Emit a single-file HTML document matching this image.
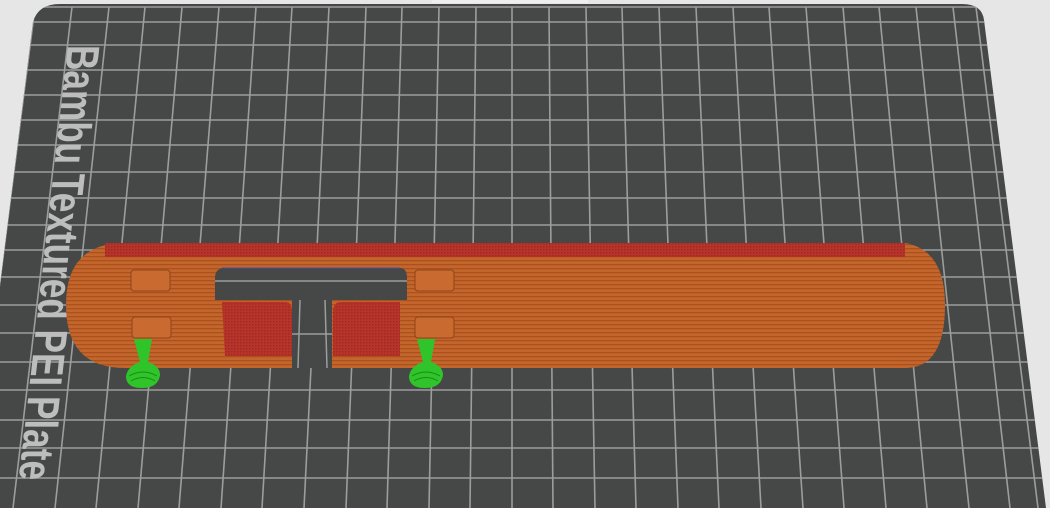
<!DOCTYPE html>
<html><head><meta charset="utf-8"><style>
html,body{margin:0;padding:0;background:#e6e6e6;width:1050px;height:508px;overflow:hidden}
svg{display:block}
</style></head><body>
<svg width="1050" height="508" viewBox="0 0 1050 508" xmlns="http://www.w3.org/2000/svg">
<defs>
<clipPath id="pl"><path d="M33,22 Q38,4 60,4 L962,4 Q982,4 984,20 L1046,508 L-28,508 Z"/></clipPath>
<pattern id="str" width="10" height="4" patternUnits="userSpaceOnUse"><rect width="10" height="4" fill="#c4652c"/><rect y="0" width="10" height="1.3" fill="#a9521f"/></pattern>
<pattern id="red" width="3" height="3" patternUnits="userSpaceOnUse"><rect width="3" height="3" fill="#b8342a"/><rect width="1.5" height="1.5" fill="#9e2a24"/></pattern>
</defs>
<path d="M33,22 Q38,4 60,4 L962,4 Q982,4 984,20 L1046,508 L-28,508 Z" fill="#464847"/>
<rect x="432" y="0" width="156" height="3" fill="#eeeeee"/>
<g clip-path="url(#pl)" stroke="#9c9e9d" stroke-width="1.6" fill="none">
<path d="M0,7H1050M0,22H1050M0,45H1050M0,70H1050M0,95H1050M0,120H1050M0,145H1050M0,172H1050M0,198H1050M0,225H1050M0,250H1050M0,277H1050M0,305H1050M0,333H1050M0,362H1050M0,390H1050M0,420H1050M0,448H1050M0,478H1050"/>
<path d="M35,7L-29,508M72,7L13,508M109,7L55,508M145,7L96,508M182,7L138,508M219,7L179,508M256,7L221,508M292,7L262,508M329,7L304,508M366,7L346,508M402,7L387,508M439,7L429,508M476,7L470,508M512,7L512,508M549,7L553,508M586,7L595,508M622,7L636,508M659,7L678,508M696,7L719,508M733,7L761,508M769,7L803,508M806,7L844,508M843,7L886,508M879,7L927,508M916,7L969,508M953,7L1010,508M976,7L1038,508"/>
</g>
<text transform="matrix(-0.113,1,-1,0,68,45)" font-family="Liberation Sans, sans-serif" font-weight="bold" font-size="46" fill="#bdbdbd" textLength="435" lengthAdjust="spacingAndGlyphs">Bambu Textured PEI Plate</text>
<path d="M125,243 L905,243 Q945,250 945,305 Q945,368 905,368 L332,368 L332,300 L292,300 L292,368 L125,368 Q66,368 66,305 Q66,243 125,243 Z" fill="url(#str)"/>
<path d="M105,243 L905,243 L905,257 L105,257 Z" fill="url(#red)"/>
<path d="M225,268 L400,268 Q407,268 407,278 L407,300 L215,300 L215,278 Q215,268 225,268Z" fill="#464847"/>
<path d="M215,281H407" stroke="#9c9e9d" stroke-width="1.5"/>
<path d="M222,268H400" stroke="#4a4aa0" stroke-width="1"/>
<path d="M292,300H332V368H292Z" fill="#464847"/>
<path d="M292,334H332M300,300L298,368M325,300L327,368" stroke="#9c9e9d" stroke-width="1.5"/>
<path d="M222,302 L285,302 Q292,302 292,312 L292,356 L225,356 Z" fill="url(#red)"/>
<path d="M341,302 L400,302 L400,356 L333,356 L333,312 Q333,302 341,302Z" fill="url(#red)"/>
<g fill="#c96a30" stroke="#8e4418" stroke-width="1">
<rect x="131" y="270" width="39" height="21" rx="3"/>
<rect x="132" y="317" width="39" height="21" rx="3"/>
<rect x="415" y="270" width="39" height="21" rx="3"/>
<rect x="415" y="317" width="39" height="21" rx="3"/>
</g>
<g fill="#2fc52a">
<path d="M134,339 L152,339 L148,362 Q160,366 160,375 Q158,388 142,388 Q126,388 126,376 Q128,366 140,362 Z"/>
<path d="M417,339 L435,339 L431,362 Q443,366 443,375 Q441,388 425,388 Q409,388 409,376 Q411,366 423,362 Z"/>
</g>
<g stroke="#1d8a1a" stroke-width="1" fill="none">
<path d="M129,376 Q143,368 157,376M131,381 Q143,374 155,381M412,376 Q426,368 440,376M414,381 Q426,374 438,381"/>
</g>
</svg>
</body></html>
